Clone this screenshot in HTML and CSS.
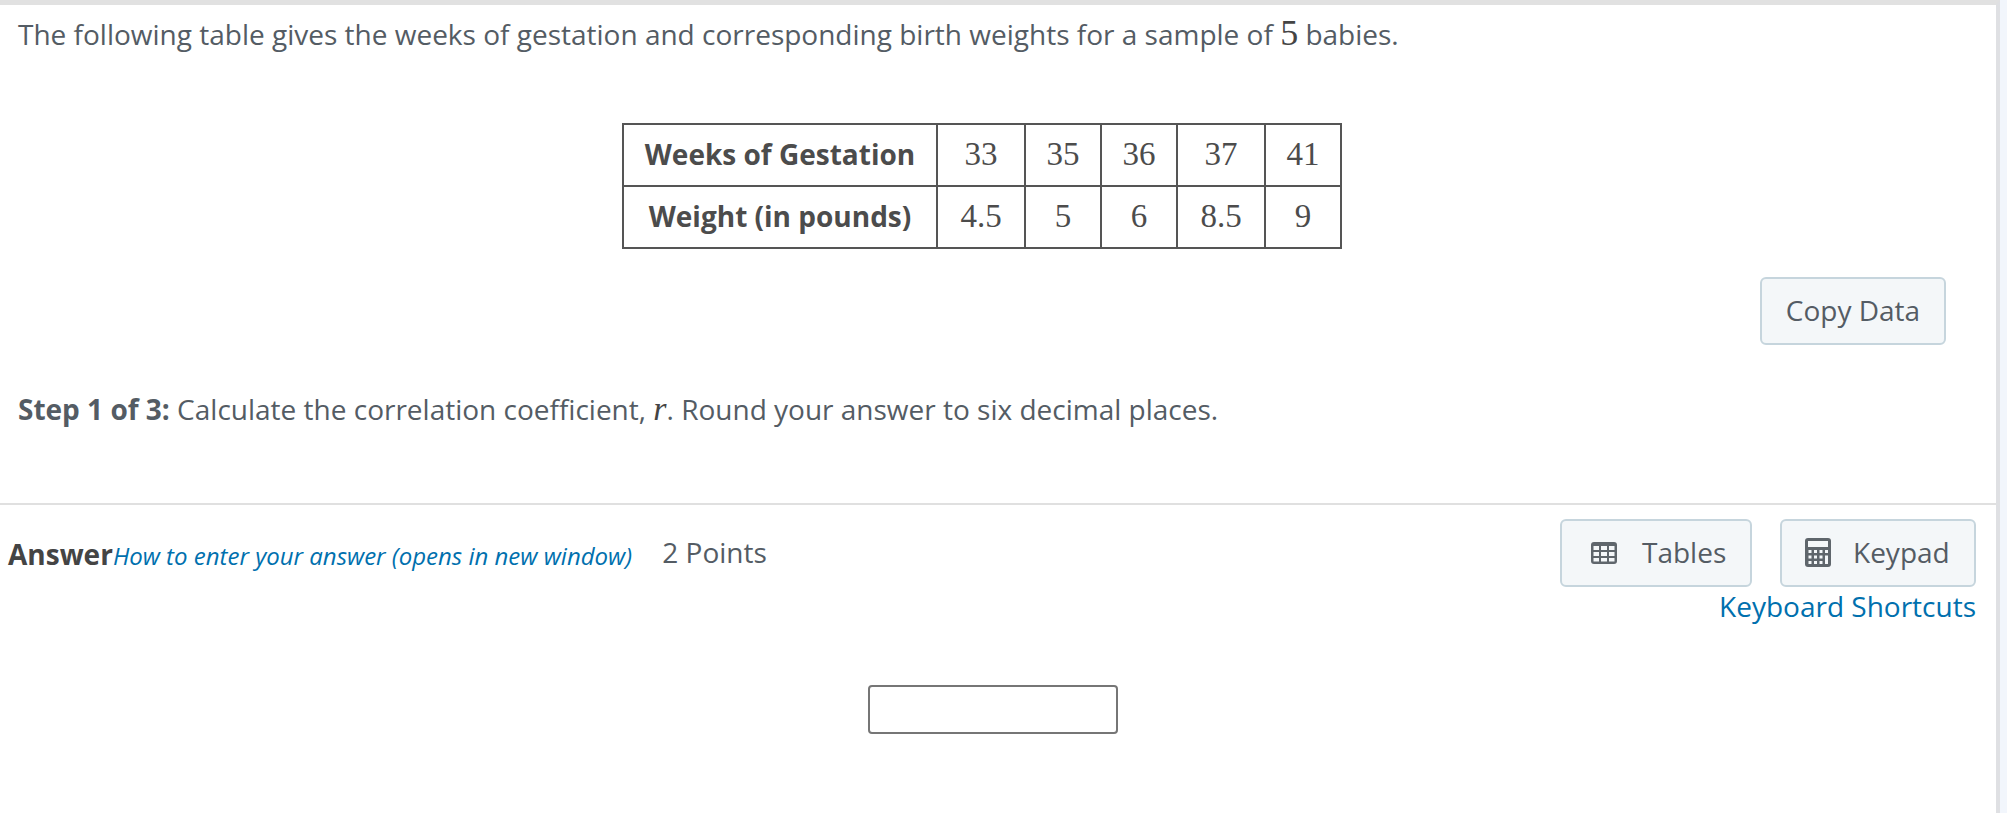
FILE: index.html
```html
<!DOCTYPE html>
<html lang="en">
  <head>
    <title>Step 1 of 3</title>
    <meta name="viewport" content="width=device-width, initial-scale=1.0">
    <link rel="stylesheet" href="styles.css">
  </head>
  <body>
    <div class="page">
      <div class="question">
        <p class="intro">The following table gives the weeks of gestation and corresponding birth weights for a sample of <span class="math">5</span> babies.</p>
        <div class="table-wrap">
          <table class="data-table">
            <tr>
              <th>Weeks of Gestation</th>
              <td class="c1">33</td>
              <td class="c2">35</td>
              <td class="c3">36</td>
              <td class="c4">37</td>
              <td class="c5">41</td>
            </tr>
            <tr>
              <th>Weight (in pounds)</th>
              <td>4.5</td>
              <td>5</td>
              <td>6</td>
              <td>8.5</td>
              <td>9</td>
            </tr>
          </table>
        </div>
        <div class="copy-row">
          <button class="btn copy-btn">Copy Data</button>
        </div>
        <p class="step"><b>Step 1 of 3:</b> Calculate the correlation coefficient, <i class="math-r">r</i>. Round your answer to six decimal places.</p>
      </div>
      <div class="answer">
        <div class="answer-head">
          <div class="answer-left">
            <span class="answer-label">Answer</span><a class="how-to" href="#">How to enter your answer (opens in new window)</a>
            <span class="points">2 Points</span>
          </div>
          <div class="answer-tools">
            <div class="tool-buttons">
              <button class="btn tool-btn tables-btn">
                <svg class="icon-table" width="26" height="22" viewBox="0 0 26 22">
                  <rect width="26" height="22" rx="3" fill="#5f666c"/>
                  <g fill="#f4f7f9">
                    <rect x="2.5" y="4" width="5.5" height="4"/>
                    <rect x="10" y="4" width="6" height="4"/>
                    <rect x="18" y="4" width="5.5" height="4"/>
                    <rect x="2.5" y="10" width="5.5" height="4"/>
                    <rect x="10" y="10" width="6" height="4"/>
                    <rect x="18" y="10" width="5.5" height="4"/>
                    <rect x="2.5" y="16" width="5.5" height="3.5"/>
                    <rect x="10" y="16" width="6" height="3.5"/>
                    <rect x="18" y="16" width="5.5" height="3.5"/>
                  </g>
                </svg>
                Tables
              </button>
              <button class="btn tool-btn keypad-btn">
                <svg class="icon-calc" width="26" height="29" viewBox="0 0 26 29">
                  <rect width="26" height="29" rx="3" fill="#5f666c"/>
                  <rect x="3" y="3" width="20" height="6" fill="#f4f7f9"/>
                  <g fill="#f4f7f9">
                    <rect x="3.5" y="12" width="3" height="3"/>
                    <rect x="9" y="12" width="3" height="3"/>
                    <rect x="14.5" y="12" width="3" height="3"/>
                    <rect x="20" y="12" width="3" height="3"/>
                    <rect x="3.5" y="17.5" width="3" height="3"/>
                    <rect x="9" y="17.5" width="3" height="3"/>
                    <rect x="14.5" y="17.5" width="3" height="3"/>
                    <rect x="3.5" y="23" width="3" height="3"/>
                    <rect x="9" y="23" width="3" height="3"/>
                    <rect x="14.5" y="23" width="3" height="3"/>
                    <rect x="20" y="17.5" width="3" height="8.5"/>
                  </g>
                </svg>
                Keypad
              </button>
            </div>
            <a class="shortcuts" href="#">Keyboard Shortcuts</a>
          </div>
        </div>
        <div class="input-row">
          <input type="text" class="answer-input">
        </div>
      </div>
    </div>
  </body>
</html>
```

FILE: styles.css
```css
html, body {
  margin: 0;
  padding: 0;
  height: 100%;
}
body {
  background-color: #f2f6fc;
  font-family: "Open Sans", Arial, sans-serif;
  color: #545c64;
  overflow: hidden;
}
.page {
  box-sizing: border-box;
  width: 2000px;
  height: 813px;
  background-color: #fff;
  border-top: 5px solid #e1e1e1;
  border-right: 4px solid #dfe0e3;
}
.question {
  box-sizing: border-box;
  height: 500px;
  padding: 0 50px 0 18px;
  border-bottom: 2px solid #e0e0e0;
}
.intro {
  margin: 0;
  padding-top: 10px;
  font-size: 28px;
  line-height: 38px;
}
.math {
  font-family: "Liberation Serif", serif;
  font-size: 36px;
  line-height: 30px;
  color: #444;
}
.table-wrap {
  display: flex;
  justify-content: center;
  padding-top: 70px;
}
.data-table {
  border-collapse: collapse;
  border: 2px solid #555;
  table-layout: fixed;
}
.data-table th, .data-table td {
  border: 2px solid #555;
  height: 58px;
  padding: 0 0 2px;
  text-align: center;
}
.data-table th {
  width: 312px;
  font-size: 28px;
  color: #4c4c4c;
}
.data-table td {
  font-family: "Liberation Serif", serif;
  font-size: 33px;
  color: #4c4c4c;
}
.c1 { width: 86px; }
.c2 { width: 74px; }
.c3 { width: 74px; }
.c4 { width: 86px; }
.c5 { width: 74px; }
.copy-row {
  display: flex;
  justify-content: flex-end;
  padding-top: 28px;
}
.btn {
  box-sizing: border-box;
  height: 68px;
  background-color: #f4f7f9;
  border: 2px solid #c6d5dd;
  border-radius: 6px;
  color: #545c64;
  font-family: "Open Sans", Arial, sans-serif;
  font-size: 28px;
  padding-bottom: 3px;
}
.copy-btn {
  width: 186px;
}
.step {
  margin: 0;
  padding-top: 45px;
  font-size: 28px;
  line-height: 38px;
}
.math-r {
  font-family: "Liberation Serif", serif;
  font-size: 34px;
  line-height: 30px;
  color: #444;
}
.answer {
  padding: 14px 20px 0 8px;
}
.answer-head {
  display: flex;
  justify-content: space-between;
}
.answer-left {
  padding-top: 15px;
  line-height: 40px;
}
.answer-label {
  font-size: 28px;
  font-weight: bold;
  color: #444;
}
.how-to {
  font-size: 24px;
  font-style: italic;
  color: #0070ae;
  text-decoration: none;
}
.points {
  margin-left: 26px;
  font-size: 28px;
  position: relative;
  top: -2px;
}
.answer-tools {
  display: flex;
  flex-direction: column;
  align-items: flex-end;
}
.tool-buttons {
  display: flex;
  gap: 28px;
}
.tool-btn {
  display: flex;
  align-items: center;
  padding: 0 0 3px 29px;
}
.tool-btn svg {
  position: relative;
  top: 1px;
}
.tables-btn {
  width: 192px;
  gap: 25px;
}
.keypad-btn {
  width: 196px;
  gap: 22px;
  padding-left: 23px;
}
.shortcuts {
  font-size: 28px;
  line-height: 38px;
  color: #0070ae;
  text-decoration: none;
}
.input-row {
  display: flex;
  justify-content: center;
  padding: 60px 0 0 2px;
}
.answer-input {
  box-sizing: border-box;
  width: 250px;
  height: 49px;
  border: 2px solid #767676;
  border-radius: 4px;
  background-color: #fff;
}
```
